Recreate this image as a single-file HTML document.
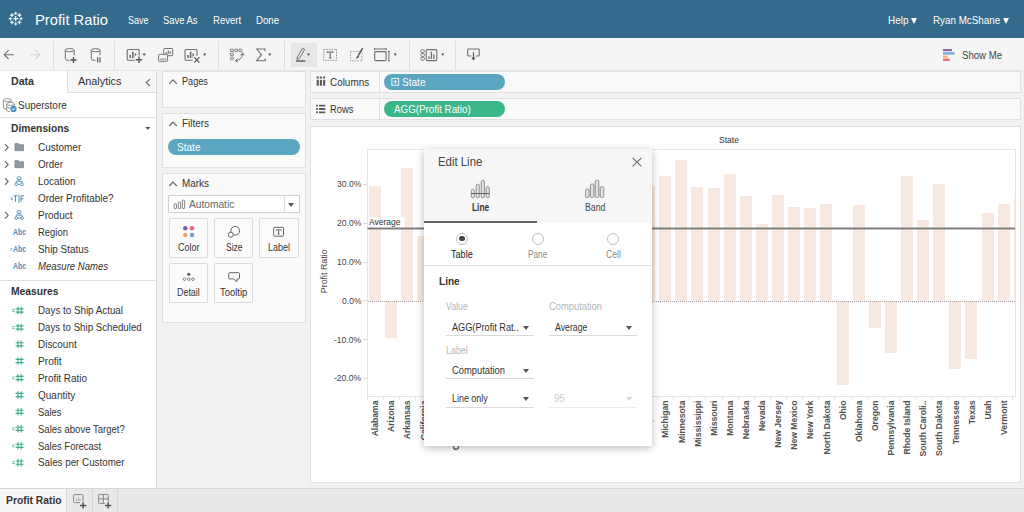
<!DOCTYPE html>
<html><head><meta charset="utf-8"><title>Profit Ratio</title>
<style>
*{box-sizing:border-box;margin:0;padding:0}
html,body{width:1024px;height:512px;overflow:hidden}
body{font-family:"Liberation Sans",sans-serif;background:#f2f2f2;color:#333;position:relative}
.a{position:absolute}
.t{position:absolute;white-space:nowrap;line-height:1;transform-origin:0 50%}
.r{position:absolute;left:0;top:0;white-space:nowrap;line-height:1;transform-origin:0 0;font-weight:700;font-size:9.5px;color:#505050}
.card{position:absolute;background:#fafafa;border:1px solid #e0e0e0}
.sep{position:absolute;top:41px;width:1px;height:29px;background:#dedede}
.tri{position:absolute;width:0;height:0;border-left:1.6px solid transparent;border-right:1.6px solid transparent;border-top:2.2px solid #555}
.btn{position:absolute;background:#fbfbfb;border:1px solid #dcdcdc;border-radius:1px}
.ul{position:absolute;height:1px;background:#d9d9d9}
.dd{position:absolute;width:0;height:0;border-left:3.1px solid transparent;border-right:3.1px solid transparent;border-top:4.2px solid #555}
svg{position:absolute;overflow:visible}
</style></head><body>
<div class="a" style="left:0;top:0;width:1024px;height:38px;background:#346b8c"></div>
<div class="a" style="left:0;top:38px;width:1024px;height:33px;background:#f5f5f5;border-bottom:1px solid #e6e6e6"></div>
<div class="sep" style="left:53px"></div><div class="sep" style="left:114px"></div><div class="sep" style="left:218px"></div><div class="sep" style="left:284px"></div><div class="sep" style="left:409px"></div><div class="sep" style="left:455px"></div>
<div class="a" style="left:290.5px;top:43px;width:26px;height:24px;background:#e7e7e7"></div>
<div class="a" style="left:0;top:71px;width:157px;height:417px;background:#fff;border-right:1px solid #d8d8d8"></div>
<div class="a" style="left:67px;top:71px;width:90px;height:22px;background:#f7f7f7;border-left:1px solid #dcdcdc;border-bottom:1px solid #dcdcdc;border-right:1px solid #d8d8d8"></div>
<div class="a" style="left:0;top:117px;width:156px;height:1px;background:#e0e0e0"></div>
<div class="a" style="left:0;top:280px;width:156px;height:1px;background:#e0e0e0"></div>
<div class="card" style="left:162px;top:71px;width:144px;height:37px"></div>
<div class="card" style="left:162px;top:113px;width:144px;height:54.5px"></div>
<div class="card" style="left:162px;top:173px;width:144px;height:150px"></div>
<div class="a" style="left:167.5px;top:139.2px;width:132.5px;height:16px;border-radius:8px;background:#5ba6c0"></div>
<div class="btn" style="left:168px;top:195px;width:132px;height:17.5px;background:#fff;border-color:#cfcfcf"></div>
<div class="a" style="left:284.4px;top:196px;width:1px;height:15.5px;background:#dcdcdc"></div>
<div class="dd" style="left:288.3px;top:202.5px"></div>
<div class="btn" style="left:168.6px;top:218px;width:39.8px;height:39.8px"></div><div class="btn" style="left:213.7px;top:218px;width:39.8px;height:39.8px"></div><div class="btn" style="left:259px;top:218px;width:39.8px;height:39.8px"></div><div class="btn" style="left:168.6px;top:263.3px;width:39.8px;height:39.8px"></div><div class="btn" style="left:213.7px;top:263.3px;width:39.8px;height:39.8px"></div>
<div class="card" style="left:310px;top:71px;width:711px;height:22px"></div>
<div class="card" style="left:310px;top:98px;width:711px;height:22px"></div>
<div class="a" style="left:379px;top:72px;width:1px;height:20px;background:#e0e0e0"></div>
<div class="a" style="left:379px;top:99px;width:1px;height:20px;background:#e0e0e0"></div>
<div class="a" style="left:384.1px;top:74px;width:121px;height:16px;border-radius:8px;background:#5ba6c0"></div>
<div class="a" style="left:384.1px;top:101px;width:121px;height:16px;border-radius:8px;background:#3cb78a"></div>
<div class="card" style="left:310px;top:126px;width:711px;height:357px;background:#fff"></div>
<div class="a" style="left:367px;top:148.5px;width:648.5px;height:248.5px;border:1px solid #e4e4e4"></div>
<div class="a" style="left:369.0px;top:185.5px;width:12px;height:115.5px;background:#f7e9df"></div><div class="a" style="left:385.1px;top:301.0px;width:12px;height:37.0px;background:#f7e9df"></div><div class="a" style="left:401.2px;top:168.0px;width:12px;height:133.0px;background:#f7e9df"></div><div class="a" style="left:417.4px;top:236.0px;width:12px;height:65.0px;background:#f7e9df"></div><div class="a" style="left:433.5px;top:215.0px;width:12px;height:86.0px;background:#f7e9df"></div><div class="a" style="left:449.6px;top:250.0px;width:12px;height:51.0px;background:#f7e9df"></div><div class="a" style="left:465.7px;top:301.0px;width:12px;height:29.0px;background:#f7e9df"></div><div class="a" style="left:481.8px;top:190.0px;width:12px;height:111.0px;background:#f7e9df"></div><div class="a" style="left:498.0px;top:210.0px;width:12px;height:91.0px;background:#f7e9df"></div><div class="a" style="left:514.1px;top:200.0px;width:12px;height:101.0px;background:#f7e9df"></div><div class="a" style="left:530.2px;top:301.0px;width:12px;height:44.0px;background:#f7e9df"></div><div class="a" style="left:546.3px;top:215.0px;width:12px;height:86.0px;background:#f7e9df"></div><div class="a" style="left:562.4px;top:225.0px;width:12px;height:76.0px;background:#f7e9df"></div><div class="a" style="left:578.6px;top:180.0px;width:12px;height:121.0px;background:#f7e9df"></div><div class="a" style="left:594.7px;top:200.0px;width:12px;height:101.0px;background:#f7e9df"></div><div class="a" style="left:610.8px;top:215.0px;width:12px;height:86.0px;background:#f7e9df"></div><div class="a" style="left:626.9px;top:190.0px;width:12px;height:111.0px;background:#f7e9df"></div><div class="a" style="left:643.0px;top:185.5px;width:12px;height:115.5px;background:#f7e9df"></div><div class="a" style="left:659.2px;top:176.0px;width:12px;height:125.0px;background:#f7e9df"></div><div class="a" style="left:675.3px;top:160.0px;width:12px;height:141.0px;background:#f7e9df"></div><div class="a" style="left:691.4px;top:186.7px;width:12px;height:114.3px;background:#f7e9df"></div><div class="a" style="left:707.5px;top:188.2px;width:12px;height:112.8px;background:#f7e9df"></div><div class="a" style="left:723.6px;top:174.0px;width:12px;height:127.0px;background:#f7e9df"></div><div class="a" style="left:739.8px;top:195.5px;width:12px;height:105.5px;background:#f7e9df"></div><div class="a" style="left:755.9px;top:223.7px;width:12px;height:77.3px;background:#f7e9df"></div><div class="a" style="left:772.0px;top:194.7px;width:12px;height:106.3px;background:#f7e9df"></div><div class="a" style="left:788.1px;top:206.7px;width:12px;height:94.3px;background:#f7e9df"></div><div class="a" style="left:804.2px;top:208.2px;width:12px;height:92.8px;background:#f7e9df"></div><div class="a" style="left:820.4px;top:203.5px;width:12px;height:97.5px;background:#f7e9df"></div><div class="a" style="left:836.5px;top:301.0px;width:12px;height:84.0px;background:#f7e9df"></div><div class="a" style="left:852.6px;top:205.0px;width:12px;height:96.0px;background:#f7e9df"></div><div class="a" style="left:868.7px;top:301.0px;width:12px;height:26.5px;background:#f7e9df"></div><div class="a" style="left:884.8px;top:301.0px;width:12px;height:51.5px;background:#f7e9df"></div><div class="a" style="left:901.0px;top:176.0px;width:12px;height:125.0px;background:#f7e9df"></div><div class="a" style="left:917.1px;top:219.5px;width:12px;height:81.5px;background:#f7e9df"></div><div class="a" style="left:933.2px;top:184.0px;width:12px;height:117.0px;background:#f7e9df"></div><div class="a" style="left:949.3px;top:301.0px;width:12px;height:67.7px;background:#f7e9df"></div><div class="a" style="left:965.4px;top:301.0px;width:12px;height:58.0px;background:#f7e9df"></div><div class="a" style="left:981.6px;top:213.2px;width:12px;height:87.8px;background:#f7e9df"></div><div class="a" style="left:997.7px;top:203.5px;width:12px;height:97.5px;background:#f7e9df"></div><div class="a" style="left:1013.6px;top:198.7px;width:1.4px;height:102.3px;background:#f7e9df"></div>
<div class="a" style="left:368px;top:300.5px;width:646.5px;height:0;border-top:1px dotted #a8a8a8"></div>
<div class="a" style="left:368px;top:216.5px;width:37px;height:11px;background:rgba(255,255,255,.85)"></div>
<svg style="left:0;top:0" width="1024" height="512"><rect x="367.5" y="227.55" width="647.5" height="1.9" fill="#7a7a7a"/></svg>
<div class="a" style="left:363px;top:183.5px;width:4px;height:1px;background:#d8d8d8"></div><div class="a" style="left:363px;top:222.5px;width:4px;height:1px;background:#d8d8d8"></div><div class="a" style="left:363px;top:261.5px;width:4px;height:1px;background:#d8d8d8"></div><div class="a" style="left:363px;top:300.2px;width:4px;height:1px;background:#d8d8d8"></div><div class="a" style="left:363px;top:339.0px;width:4px;height:1px;background:#d8d8d8"></div><div class="a" style="left:363px;top:377.5px;width:4px;height:1px;background:#d8d8d8"></div><div class="a" style="left:366.9px;top:397px;width:1px;height:3px;background:#e4e4e4"></div><div class="a" style="left:383.0px;top:397px;width:1px;height:3px;background:#e4e4e4"></div><div class="a" style="left:399.1px;top:397px;width:1px;height:3px;background:#e4e4e4"></div><div class="a" style="left:415.3px;top:397px;width:1px;height:3px;background:#e4e4e4"></div><div class="a" style="left:431.4px;top:397px;width:1px;height:3px;background:#e4e4e4"></div><div class="a" style="left:447.5px;top:397px;width:1px;height:3px;background:#e4e4e4"></div><div class="a" style="left:463.6px;top:397px;width:1px;height:3px;background:#e4e4e4"></div><div class="a" style="left:479.7px;top:397px;width:1px;height:3px;background:#e4e4e4"></div><div class="a" style="left:495.9px;top:397px;width:1px;height:3px;background:#e4e4e4"></div><div class="a" style="left:512.0px;top:397px;width:1px;height:3px;background:#e4e4e4"></div><div class="a" style="left:528.1px;top:397px;width:1px;height:3px;background:#e4e4e4"></div><div class="a" style="left:544.2px;top:397px;width:1px;height:3px;background:#e4e4e4"></div><div class="a" style="left:560.3px;top:397px;width:1px;height:3px;background:#e4e4e4"></div><div class="a" style="left:576.5px;top:397px;width:1px;height:3px;background:#e4e4e4"></div><div class="a" style="left:592.6px;top:397px;width:1px;height:3px;background:#e4e4e4"></div><div class="a" style="left:608.7px;top:397px;width:1px;height:3px;background:#e4e4e4"></div><div class="a" style="left:624.8px;top:397px;width:1px;height:3px;background:#e4e4e4"></div><div class="a" style="left:640.9px;top:397px;width:1px;height:3px;background:#e4e4e4"></div><div class="a" style="left:657.1px;top:397px;width:1px;height:3px;background:#e4e4e4"></div><div class="a" style="left:673.2px;top:397px;width:1px;height:3px;background:#e4e4e4"></div><div class="a" style="left:689.3px;top:397px;width:1px;height:3px;background:#e4e4e4"></div><div class="a" style="left:705.4px;top:397px;width:1px;height:3px;background:#e4e4e4"></div><div class="a" style="left:721.5px;top:397px;width:1px;height:3px;background:#e4e4e4"></div><div class="a" style="left:737.7px;top:397px;width:1px;height:3px;background:#e4e4e4"></div><div class="a" style="left:753.8px;top:397px;width:1px;height:3px;background:#e4e4e4"></div><div class="a" style="left:769.9px;top:397px;width:1px;height:3px;background:#e4e4e4"></div><div class="a" style="left:786.0px;top:397px;width:1px;height:3px;background:#e4e4e4"></div><div class="a" style="left:802.1px;top:397px;width:1px;height:3px;background:#e4e4e4"></div><div class="a" style="left:818.3px;top:397px;width:1px;height:3px;background:#e4e4e4"></div><div class="a" style="left:834.4px;top:397px;width:1px;height:3px;background:#e4e4e4"></div><div class="a" style="left:850.5px;top:397px;width:1px;height:3px;background:#e4e4e4"></div><div class="a" style="left:866.6px;top:397px;width:1px;height:3px;background:#e4e4e4"></div><div class="a" style="left:882.7px;top:397px;width:1px;height:3px;background:#e4e4e4"></div><div class="a" style="left:898.9px;top:397px;width:1px;height:3px;background:#e4e4e4"></div><div class="a" style="left:915.0px;top:397px;width:1px;height:3px;background:#e4e4e4"></div><div class="a" style="left:931.1px;top:397px;width:1px;height:3px;background:#e4e4e4"></div><div class="a" style="left:947.2px;top:397px;width:1px;height:3px;background:#e4e4e4"></div><div class="a" style="left:963.3px;top:397px;width:1px;height:3px;background:#e4e4e4"></div><div class="a" style="left:979.5px;top:397px;width:1px;height:3px;background:#e4e4e4"></div><div class="a" style="left:995.6px;top:397px;width:1px;height:3px;background:#e4e4e4"></div><div class="a" style="left:1011.7px;top:397px;width:1px;height:3px;background:#e4e4e4"></div>
<div class="r" style="transform:translate(375.0px,400.5px) rotate(-90deg) scaleX(.905) translate(-100%,-50%)">Alabama</div><div class="r" style="transform:translate(391.1px,400.5px) rotate(-90deg) scaleX(.905) translate(-100%,-50%)">Arizona</div><div class="r" style="transform:translate(407.2px,400.5px) rotate(-90deg) scaleX(.905) translate(-100%,-50%)">Arkansas</div><div class="r" style="transform:translate(423.4px,400.5px) rotate(-90deg) scaleX(.905) translate(-100%,-50%)">California</div><div class="r" style="transform:translate(439.5px,400.5px) rotate(-90deg) scaleX(.905) translate(-100%,-50%)">Colorado</div><div class="r" style="transform:translate(455.6px,400.5px) rotate(-90deg) scaleX(.905) translate(-100%,-50%)">Connecticut</div><div class="r" style="transform:translate(471.7px,400.5px) rotate(-90deg) scaleX(.905) translate(-100%,-50%)">Delaware</div><div class="r" style="transform:translate(487.8px,400.5px) rotate(-90deg) scaleX(.905) translate(-100%,-50%)">Florida</div><div class="r" style="transform:translate(504.0px,400.5px) rotate(-90deg) scaleX(.905) translate(-100%,-50%)">Georgia</div><div class="r" style="transform:translate(520.1px,400.5px) rotate(-90deg) scaleX(.905) translate(-100%,-50%)">Idaho</div><div class="r" style="transform:translate(536.2px,400.5px) rotate(-90deg) scaleX(.905) translate(-100%,-50%)">Illinois</div><div class="r" style="transform:translate(552.3px,400.5px) rotate(-90deg) scaleX(.905) translate(-100%,-50%)">Indiana</div><div class="r" style="transform:translate(568.4px,400.5px) rotate(-90deg) scaleX(.905) translate(-100%,-50%)">Iowa</div><div class="r" style="transform:translate(584.6px,400.5px) rotate(-90deg) scaleX(.905) translate(-100%,-50%)">Kansas</div><div class="r" style="transform:translate(600.7px,400.5px) rotate(-90deg) scaleX(.905) translate(-100%,-50%)">Kentucky</div><div class="r" style="transform:translate(616.8px,400.5px) rotate(-90deg) scaleX(.905) translate(-100%,-50%)">Louisiana</div><div class="r" style="transform:translate(632.9px,400.5px) rotate(-90deg) scaleX(.905) translate(-100%,-50%)">Maine</div><div class="r" style="transform:translate(649.0px,400.5px) rotate(-90deg) scaleX(.905) translate(-100%,-50%)"></div><div class="r" style="transform:translate(665.2px,400.5px) rotate(-90deg) scaleX(.905) translate(-100%,-50%)">Michigan</div><div class="r" style="transform:translate(681.3px,400.5px) rotate(-90deg) scaleX(.905) translate(-100%,-50%)">Minnesota</div><div class="r" style="transform:translate(697.4px,400.5px) rotate(-90deg) scaleX(.905) translate(-100%,-50%)">Mississippi</div><div class="r" style="transform:translate(713.5px,400.5px) rotate(-90deg) scaleX(.905) translate(-100%,-50%)">Missouri</div><div class="r" style="transform:translate(729.6px,400.5px) rotate(-90deg) scaleX(.905) translate(-100%,-50%)">Montana</div><div class="r" style="transform:translate(745.8px,400.5px) rotate(-90deg) scaleX(.905) translate(-100%,-50%)">Nebraska</div><div class="r" style="transform:translate(761.9px,400.5px) rotate(-90deg) scaleX(.905) translate(-100%,-50%)">Nevada</div><div class="r" style="transform:translate(778.0px,400.5px) rotate(-90deg) scaleX(.905) translate(-100%,-50%)">New Jersey</div><div class="r" style="transform:translate(794.1px,400.5px) rotate(-90deg) scaleX(.905) translate(-100%,-50%)">New Mexico</div><div class="r" style="transform:translate(810.2px,400.5px) rotate(-90deg) scaleX(.905) translate(-100%,-50%)">New York</div><div class="r" style="transform:translate(826.4px,400.5px) rotate(-90deg) scaleX(.905) translate(-100%,-50%)">North Dakota</div><div class="r" style="transform:translate(842.5px,400.5px) rotate(-90deg) scaleX(.905) translate(-100%,-50%)">Ohio</div><div class="r" style="transform:translate(858.6px,400.5px) rotate(-90deg) scaleX(.905) translate(-100%,-50%)">Oklahoma</div><div class="r" style="transform:translate(874.7px,400.5px) rotate(-90deg) scaleX(.905) translate(-100%,-50%)">Oregon</div><div class="r" style="transform:translate(890.8px,400.5px) rotate(-90deg) scaleX(.905) translate(-100%,-50%)">Pennsylvania</div><div class="r" style="transform:translate(907.0px,400.5px) rotate(-90deg) scaleX(.905) translate(-100%,-50%)">Rhode Island</div><div class="r" style="transform:translate(923.1px,400.5px) rotate(-90deg) scaleX(.905) translate(-100%,-50%)">South Caroli..</div><div class="r" style="transform:translate(939.2px,400.5px) rotate(-90deg) scaleX(.905) translate(-100%,-50%)">South Dakota</div><div class="r" style="transform:translate(955.3px,400.5px) rotate(-90deg) scaleX(.905) translate(-100%,-50%)">Tennessee</div><div class="r" style="transform:translate(971.4px,400.5px) rotate(-90deg) scaleX(.905) translate(-100%,-50%)">Texas</div><div class="r" style="transform:translate(987.6px,400.5px) rotate(-90deg) scaleX(.905) translate(-100%,-50%)">Utah</div><div class="r" style="transform:translate(1003.7px,400.5px) rotate(-90deg) scaleX(.905) translate(-100%,-50%)">Vermont</div>
<div class="a" style="left:653px;top:420px;width:1px;height:2px;background:#b9d0e8"></div>
<div class="r" style="font-weight:400;font-size:9.5px;color:#444;transform:translate(324.1px,271.3px) rotate(-90deg) scaleX(.93) translate(-50%,-50%)">Profit Ratio</div>
<div class="a" style="left:424px;top:149px;width:228px;height:297px;background:#fff;box-shadow:0 2px 8px rgba(0,0,0,.27)"></div>
<div class="a" style="left:424px;top:149px;width:228px;height:74px;background:#f7f7f7"></div>
<div class="a" style="left:424px;top:220.5px;width:113.2px;height:2.3px;background:#666"></div>
<div class="a" style="left:424px;top:265px;width:228px;height:1px;background:#e2e2e2"></div>
<div class="ul" style="left:445.7px;top:334.5px;width:88px"></div><div class="ul" style="left:549px;top:334.5px;width:87.7px"></div><div class="ul" style="left:445.7px;top:378px;width:88px"></div><div class="ul" style="left:445.7px;top:406.5px;width:88px"></div><div class="ul" style="left:549px;top:406.5px;width:87.7px;background:#ececec"></div>
<div class="dd" style="left:523.2px;top:325.5px;border-top-color:#555"></div><div class="dd" style="left:626.3px;top:325.5px;border-top-color:#555"></div><div class="dd" style="left:523.2px;top:369px;border-top-color:#555"></div><div class="dd" style="left:523.2px;top:397.2px;border-top-color:#555"></div><div class="dd" style="left:626.3px;top:397.2px;border-top-color:#d6d6d6"></div>
<div class="a" style="left:456px;top:232.5px;width:12px;height:12px;border-radius:50%;background:#fff;border:1px solid #bdbdbd"></div><div class="a" style="left:531.7px;top:232.5px;width:12px;height:12px;border-radius:50%;background:#fff;border:1px solid #bdbdbd"></div><div class="a" style="left:607.2px;top:232.5px;width:12px;height:12px;border-radius:50%;background:#fff;border:1px solid #bdbdbd"></div><div class="a" style="left:459.2px;top:235.7px;width:5.6px;height:5.6px;border-radius:50%;background:#444"></div>
<div class="a" style="left:0;top:488px;width:1024px;height:24px;background:#e9e9e9;border-top:1px solid #d6d6d6"></div>
<div class="a" style="left:0;top:489px;width:66px;height:23px;background:#f6f6f6"></div>
<div class="a" style="left:66px;top:489px;width:1px;height:23px;background:#d6d6d6"></div><div class="a" style="left:92px;top:489px;width:1px;height:23px;background:#d6d6d6"></div><div class="a" style="left:117px;top:489px;width:1px;height:23px;background:#d6d6d6"></div>
<div class="a" style="left:910.9px;top:17.6px;width:0;height:0;border-left:3.2px solid transparent;border-right:3.2px solid transparent;border-top:6.2px solid #fff"></div><div class="a" style="left:1003px;top:17.6px;width:0;height:0;border-left:3.2px solid transparent;border-right:3.2px solid transparent;border-top:6.2px solid #fff"></div>
<div class="t" style="left:35px;top:12.10px;font-size:15px;color:#fff;transform:scaleX(0.9851)">Profit Ratio</div>
<div class="t" style="left:127.5px;top:14.70px;font-size:11px;color:#fff;transform:scaleX(0.8174)">Save</div>
<div class="t" style="left:163px;top:14.70px;font-size:11px;color:#fff;transform:scaleX(0.8548)">Save As</div>
<div class="t" style="left:212.5px;top:14.70px;font-size:11px;color:#fff;transform:scaleX(0.8702)">Revert</div>
<div class="t" style="left:255.5px;top:14.70px;font-size:11px;color:#fff;transform:scaleX(0.8746)">Done</div>
<div class="t" style="left:887.7px;top:14.70px;font-size:11px;color:#fff;transform:scaleX(0.9017)">Help</div>
<div class="t" style="left:933.2px;top:14.70px;font-size:11px;color:#fff;transform:scaleX(0.8921)">Ryan McShane</div>
<div class="t" style="left:962px;top:50.00px;font-size:11px;color:#444;transform:scaleX(0.8722)">Show Me</div>
<div class="t" style="left:11px;top:75.65px;font-size:11.5px;color:#333;font-weight:700;transform:scaleX(0.9223)">Data</div>
<div class="t" style="left:77.7px;top:75.85px;font-size:11.5px;color:#333;transform:scaleX(0.9450)">Analytics</div>
<div class="t" style="left:18.2px;top:99.95px;font-size:10.5px;color:#333;transform:scaleX(0.9499)">Superstore</div>
<div class="t" style="left:11px;top:123.25px;font-size:11.5px;color:#333;font-weight:700;transform:scaleX(0.8928)">Dimensions</div>
<div class="t" style="left:37.5px;top:142.25px;font-size:10.5px;color:#333;transform:scaleX(0.9491)">Customer</div>
<div class="t" style="left:37.5px;top:159.25px;font-size:10.5px;color:#333;transform:scaleX(0.9313)">Order</div>
<div class="t" style="left:37.5px;top:176.25px;font-size:10.5px;color:#333;transform:scaleX(0.9445)">Location</div>
<div class="t" style="left:37.5px;top:193.25px;font-size:10.5px;color:#333;transform:scaleX(0.9441)">Order Profitable?</div>
<div class="t" style="left:37.5px;top:210.05px;font-size:10.5px;color:#333;transform:scaleX(0.9534)">Product</div>
<div class="t" style="left:37.5px;top:226.95px;font-size:10.5px;color:#333;transform:scaleX(0.9014)">Region</div>
<div class="t" style="left:37.5px;top:243.95px;font-size:10.5px;color:#333;transform:scaleX(0.9441)">Ship Status</div>
<div class="t" style="left:37.5px;top:260.95px;font-size:10.5px;color:#333;font-style:italic;transform:scaleX(0.9087)">Measure Names</div>
<div class="t" style="left:11px;top:286.45px;font-size:11.5px;color:#333;font-weight:700;transform:scaleX(0.8952)">Measures</div>
<div class="t" style="left:37.5px;top:305.25px;font-size:10.5px;color:#333;transform:scaleX(0.9334)">Days to Ship Actual</div>
<div class="t" style="left:37.5px;top:322.25px;font-size:10.5px;color:#333;transform:scaleX(0.9252)">Days to Ship Scheduled</div>
<div class="t" style="left:37.5px;top:339.05px;font-size:10.5px;color:#333;transform:scaleX(0.9472)">Discount</div>
<div class="t" style="left:37.5px;top:355.75px;font-size:10.5px;color:#333;transform:scaleX(0.9667)">Profit</div>
<div class="t" style="left:37.5px;top:372.75px;font-size:10.5px;color:#333;transform:scaleX(0.9434)">Profit Ratio</div>
<div class="t" style="left:37.5px;top:389.75px;font-size:10.5px;color:#333;transform:scaleX(0.9512)">Quantity</div>
<div class="t" style="left:37.5px;top:406.55px;font-size:10.5px;color:#333;transform:scaleX(0.8947)">Sales</div>
<div class="t" style="left:37.5px;top:423.55px;font-size:10.5px;color:#333;transform:scaleX(0.9074)">Sales above Target?</div>
<div class="t" style="left:37.5px;top:440.55px;font-size:10.5px;color:#333;transform:scaleX(0.9025)">Sales Forecast</div>
<div class="t" style="left:37.5px;top:457.35px;font-size:10.5px;color:#333;transform:scaleX(0.9321)">Sales per Customer</div>
<div class="t" style="left:5.6px;top:495.35px;font-size:11.5px;color:#333;font-weight:700;transform:scaleX(0.8970)">Profit Ratio</div>
<div class="t" style="left:181.7px;top:76.35px;font-size:10.5px;color:#333;transform:scaleX(0.8697)">Pages</div>
<div class="t" style="left:181.7px;top:118.45px;font-size:10.5px;color:#333;transform:scaleX(0.9443)">Filters</div>
<div class="t" style="left:176.7px;top:142.25px;font-size:10.5px;color:#fff;transform:scaleX(0.9580)">State</div>
<div class="t" style="left:181.7px;top:178.45px;font-size:10.5px;color:#333;transform:scaleX(0.9443)">Marks</div>
<div class="t" style="left:189.2px;top:198.55px;font-size:10.5px;color:#666;transform:scaleX(0.9703)">Automatic</div>
<div class="t" style="left:177.7px;top:242.80px;font-size:10px;color:#333;transform:scaleX(0.8993)">Color</div>
<div class="t" style="left:225.5px;top:242.80px;font-size:10px;color:#333;transform:scaleX(0.8482)">Size</div>
<div class="t" style="left:267.8px;top:242.80px;font-size:10px;color:#333;transform:scaleX(0.8950)">Label</div>
<div class="t" style="left:177.2px;top:288.10px;font-size:10px;color:#333;transform:scaleX(0.8914)">Detail</div>
<div class="t" style="left:220.2px;top:288.10px;font-size:10px;color:#333;transform:scaleX(0.9444)">Tooltip</div>
<div class="t" style="left:330px;top:76.75px;font-size:10.5px;color:#333;transform:scaleX(0.9436)">Columns</div>
<div class="t" style="left:329.7px;top:103.95px;font-size:10.5px;color:#333;transform:scaleX(0.8871)">Rows</div>
<div class="t" style="left:401.6px;top:76.95px;font-size:10.5px;color:#fff;transform:scaleX(0.9580)">State</div>
<div class="t" style="left:393.5px;top:104.15px;font-size:10.5px;color:#fff;transform:scaleX(0.9322)">AGG(Profit Ratio)</div>
<div class="t" style="left:718.7px;top:135.25px;font-size:9.5px;color:#333;transform:scaleX(0.9014)">State</div>
<div class="t" style="left:336.7px;top:178.85px;font-size:9.5px;color:#444;transform:scaleX(0.9021)">30.0%</div>
<div class="t" style="left:336.7px;top:218.45px;font-size:9.5px;color:#444;transform:scaleX(0.9021)">20.0%</div>
<div class="t" style="left:336.7px;top:257.25px;font-size:9.5px;color:#444;transform:scaleX(0.9021)">10.0%</div>
<div class="t" style="left:341.5px;top:295.85px;font-size:9.5px;color:#444;transform:scaleX(0.9004)">0.0%</div>
<div class="t" style="left:334px;top:334.55px;font-size:9.5px;color:#444;transform:scaleX(0.8967)">-10.0%</div>
<div class="t" style="left:334px;top:373.25px;font-size:9.5px;color:#444;transform:scaleX(0.8967)">-20.0%</div>
<div class="t" style="left:369.3px;top:216.85px;font-size:9.5px;color:#333;transform:scaleX(0.8916)">Average</div>
<div class="t" style="left:438.2px;top:156.00px;font-size:12px;color:#444;transform:scaleX(0.9485)">Edit Line</div>
<div class="t" style="left:472px;top:202.80px;font-size:10px;color:#333;font-weight:700;transform:scaleX(0.8365)">Line</div>
<div class="t" style="left:584.5px;top:202.80px;font-size:10px;color:#444;transform:scaleX(0.8776)">Band</div>
<div class="t" style="left:451px;top:249.60px;font-size:10px;color:#222;transform:scaleX(0.9077)">Table</div>
<div class="t" style="left:527.7px;top:249.60px;font-size:10px;color:#888;transform:scaleX(0.8262)">Pane</div>
<div class="t" style="left:606.2px;top:249.60px;font-size:10px;color:#888;transform:scaleX(0.8587)">Cell</div>
<div class="t" style="left:438.5px;top:276.45px;font-size:11.5px;color:#333;font-weight:700;transform:scaleX(0.8756)">Line</div>
<div class="t" style="left:445.7px;top:302.20px;font-size:10px;color:#b5b5b5;transform:scaleX(0.8775)">Value</div>
<div class="t" style="left:549px;top:302.20px;font-size:10px;color:#b5b5b5;transform:scaleX(0.9347)">Computation</div>
<div class="t" style="left:451.5px;top:322.60px;font-size:10px;color:#333;transform:scaleX(0.9162)">AGG(Profit Rat..</div>
<div class="t" style="left:554.5px;top:322.60px;font-size:10px;color:#333;transform:scaleX(0.8765)">Average</div>
<div class="t" style="left:445.7px;top:346.20px;font-size:10px;color:#b5b5b5;transform:scaleX(0.8909)">Label</div>
<div class="t" style="left:451.5px;top:365.60px;font-size:10px;color:#333;transform:scaleX(0.9347)">Computation</div>
<div class="t" style="left:451.5px;top:393.80px;font-size:10px;color:#333;transform:scaleX(0.8918)">Line only</div>
<div class="t" style="left:554.2px;top:393.80px;font-size:10px;color:#ccc;transform:scaleX(0.9708)">95</div>
<svg style="left:0;top:0" width="1024" height="512" viewBox="0 0 1024 512" fill="none" stroke-linecap="butt">
<path d="M13.1 18.7H18.3M15.7 16.099999999999998V21.3" stroke="#fff" stroke-width="1.3"/><path d="M14.1 13.399999999999999H17.3M15.7 11.799999999999999V14.999999999999998" stroke="#fff" stroke-width="1.0"/><path d="M14.1 24.0H17.3M15.7 22.4V25.6" stroke="#fff" stroke-width="1.0"/><path d="M8.7 18.7H11.899999999999999M10.299999999999999 17.099999999999998V20.3" stroke="#fff" stroke-width="1.0"/><path d="M19.5 18.7H22.700000000000003M21.1 17.099999999999998V20.3" stroke="#fff" stroke-width="1.0"/><path d="M10.1 15.1H13.9M12.0 13.2V17.0" stroke="#fff" stroke-width="1.1"/><path d="M17.5 15.1H21.299999999999997M19.4 13.2V17.0" stroke="#fff" stroke-width="1.1"/><path d="M10.1 22.3H13.9M12.0 20.400000000000002V24.2" stroke="#fff" stroke-width="1.1"/><path d="M17.5 22.3H21.299999999999997M19.4 20.400000000000002V24.2" stroke="#fff" stroke-width="1.1"/>
<path d="M13.7 54.7H4.2M8.7 50.2L4.2 54.7L8.7 59.2" stroke="#6f6f6f" stroke-width="1.1"/><path d="M30 54.7H39.6M35.2 50.2L39.7 54.7L35.2 59.2" stroke="#d2d2d2" stroke-width="1.1"/><ellipse cx="69.75" cy="50.2" rx="4.450000000000003" ry="1.6" stroke="#6f6f6f" stroke-width="1"/><path d="M65.3 50.2V58.3Q65.3 60.4 68.3 60.4H69.5M74.2 50.2V55.4" stroke="#6f6f6f" stroke-width="1"/><path d="M70.4 60H76.6M73.5 57V63" stroke="#555" stroke-width="1.4"/><ellipse cx="95.65" cy="50.2" rx="4.350000000000001" ry="1.6" stroke="#6f6f6f" stroke-width="1"/><path d="M91.3 50.2V58.3Q91.3 60.4 94.3 60.4H95.5M100 50.2V55.4" stroke="#6f6f6f" stroke-width="1"/><path d="M97.6 57.2V62.6M100 57.2V62.6" stroke="#666" stroke-width="1.3"/>
<rect x="127.2" y="49.5" width="12" height="10.8" rx="1" stroke="#6f6f6f" stroke-width="1.1"/><path d="M130.2 58V55M132.9 58V51.8M135.5 58V53.5" stroke="#666" stroke-width="1.5"/><rect x="134.8" y="55.6" width="8" height="8" fill="#f5f5f5" stroke="none"/><path d="M135.8 59.8H142.2M139 56.6V63" stroke="#555" stroke-width="1.4"/><path d="M142.6 53.6h3.2l-1.6 2.4z" fill="#555" stroke="none"/><rect x="163.7" y="48.5" width="9" height="7.2" rx=".8" stroke="#6f6f6f" stroke-width="1"/><path d="M166.2 54V52M168.2 54V50.3M170.2 54V51.3" stroke="#6f6f6f" stroke-width="1.1"/><rect x="158.6" y="54.3" width="9" height="7" rx=".8" fill="#f5f5f5" stroke="#6f6f6f" stroke-width="1"/><path d="M160.3 59.2h1.4M162.4 59.2h1.4M164.5 59.2h1.4" stroke="#6f6f6f" stroke-width="1.3"/><rect x="185" y="49.5" width="12" height="10.8" rx="1" stroke="#6f6f6f" stroke-width="1.1"/><path d="M188 58V55M190.6 58V51.8M193.2 58V53.5" stroke="#666" stroke-width="1.5"/><rect x="192.8" y="55.8" width="8" height="8" fill="#f5f5f5" stroke="none"/><path d="M194.2 57.2L199.4 62.6M199.4 57.2L194.2 62.6" stroke="#555" stroke-width="1.2"/><path d="M203 53.6h3.2l-1.6 2.4z" fill="#555" stroke="none"/>
<rect x="230.4" y="49.2" width="3" height="2.4" rx=".7" stroke="#6f6f6f" stroke-width=".9"/><rect x="234.7" y="49.2" width="3" height="2.4" rx=".7" stroke="#6f6f6f" stroke-width=".9"/><rect x="239" y="49.2" width="3" height="2.4" rx=".7" stroke="#6f6f6f" stroke-width=".9"/><rect x="230.4" y="53.2" width="3" height="2.4" rx=".7" stroke="#6f6f6f" stroke-width=".9"/><rect x="230.4" y="57.2" width="3" height="2.4" rx=".7" stroke="#6f6f6f" stroke-width=".9"/><path d="M236 60.6Q242.3 59.6 242.6 53.5" stroke="#6f6f6f" stroke-width="1"/><path d="M240.8 55.4L242.6 52.8L244.2 55.4M237.6 58.8L235.3 60.7L237.8 62.2" stroke="#6f6f6f" stroke-width="1"/><path d="M265 51V49H256.8L261.4 54.8L256.6 60.8H265.2V58.6" stroke="#6f6f6f" stroke-width="1.1"/><path d="M268.2 53.6h3.2l-1.6 2.4z" fill="#555" stroke="none"/><path d="M302.6 48.3L304.7 49.4L299.6 58.2L297 59.4L297.4 57.1Z" stroke="#6f6f6f" stroke-width="1"/><path d="M296 61H305.4" stroke="#777" stroke-width="1.8"/><path d="M306.9 53.6h3.2l-1.6 2.4z" fill="#555" stroke="none"/><rect x="323.7" y="49.4" width="12.8" height="11" stroke="#888" stroke-width=".9" stroke-dasharray="1.5 1.1"/><path d="M327.3 53V52H333V53M330.15 52V58M329 58H331.3" stroke="#666" stroke-width="1.1"/><rect x="350.6" y="51.4" width="11.2" height="9.4" stroke="#999" stroke-width=".9" stroke-dasharray="1.5 1.1"/><path d="M362.6 48.2L358.3 55.6" stroke="#555" stroke-width="1.4"/><path d="M358 55.4L356 58.3L359 57.2Z" fill="#555" stroke="#555" stroke-width=".6"/><rect x="374.7" y="51.6" width="11.4" height="9" rx=".8" stroke="#6f6f6f" stroke-width="1.1"/><path d="M374.4 49H386.4M374.6 48V50M386.2 48V50M388.9 51.4V61M388 51.5H389.9M388 60.9H389.9" stroke="#6f6f6f" stroke-width="1"/><path d="M393.6 53.6h3.2l-1.6 2.4z" fill="#555" stroke="none"/><rect x="420.8" y="49.8" width="3.6" height="2.8" rx="1" stroke="#6f6f6f" stroke-width=".9"/><rect x="420.8" y="53.6" width="3.6" height="2.8" rx="1" stroke="#6f6f6f" stroke-width=".9"/><rect x="420.8" y="57.4" width="3.6" height="2.8" rx="1" stroke="#6f6f6f" stroke-width=".9"/><rect x="426.2" y="49.6" width="10.6" height="11" rx="1" stroke="#6f6f6f" stroke-width="1.1"/><path d="M429 59V56.3M431.4 59V51.8M433.8 59V54.2" stroke="#6f6f6f" stroke-width="1.3"/><path d="M441.1 53.6h3.2l-1.6 2.4z" fill="#555" stroke="none"/><path d="M471.3 56H468.6Q467.7 56 467.7 55V49.9Q467.7 49 468.6 49H478.3Q479.2 49 479.2 49.9V55Q479.2 56 478.3 56H475.6" stroke="#6f6f6f" stroke-width="1.1"/><path d="M473.45 52.3V58.6" stroke="#555" stroke-width="1.1"/><path d="M471.4 57.6H475.5L473.45 60.7Z" fill="#555" stroke="none"/>
<rect x="943" y="49" width="9" height="2.2" fill="#8e6aa8"/><rect x="943" y="52.2" width="11.5" height="2.4" fill="#79a8dc"/><rect x="943" y="55.6" width="4.6" height="2.1" fill="#f6a860"/><rect x="943" y="58.6" width="6.8" height="2.3" fill="#ee6a7c"/>
<path d="M150 79.2L146.2 82.6L150 86" stroke="#666" stroke-width="1.1"/><path d="M169.2 83.89999999999999L173 79.89999999999999L176.8 83.89999999999999" stroke="#666" stroke-width="1.1"/><path d="M169.2 126.0L173 122.0L176.8 126.0" stroke="#666" stroke-width="1.1"/><path d="M169.2 186.0L173 182.0L176.8 186.0" stroke="#666" stroke-width="1.1"/><path d="M145.2 127h5.2l-2.6 2.8z" fill="#555" stroke="none"/><g stroke="#8a8a8a" stroke-width=".9"><ellipse cx="7.3" cy="100.2" rx="3.9" ry="1.5"/><path d="M3.4 100.2V107.6Q3.4 109.2 7 109.3M11.2 100.2V102"/><ellipse cx="10.6" cy="103.9" rx="3.9" ry="1.5"/><path d="M6.7 103.9V110Q6.7 111.6 10 111.7M14.5 103.9V105.6M6.7 106.8Q7.5 108 10 108.1"/></g><circle cx="13.5" cy="108.9" r="3.1" fill="#3d8fc4"/><path d="M12 108.9L13.1 110.1L15.1 107.7" stroke="#fff" stroke-width=".9"/>
<path d="M5 144.1L8.2 147.5L5 150.9" stroke="#666" stroke-width="1.1"/><path d="M5 161.1L8.2 164.5L5 167.9" stroke="#666" stroke-width="1.1"/><path d="M5 178.1L8.2 181.5L5 184.9" stroke="#666" stroke-width="1.1"/><path d="M5 211.9L8.2 215.3L5 218.70000000000002" stroke="#666" stroke-width="1.1"/><path d="M14.9 143.6H18.4L19.2 144.7H23.5V150.7H14.9Z" fill="#9499a5" stroke="#7e8391" stroke-width=".7"/><path d="M14.9 160.6H18.4L19.2 161.7H23.5V167.7H14.9Z" fill="#9499a5" stroke="#7e8391" stroke-width=".7"/><g stroke="#4c8db6" stroke-width=".9"><rect x="17.3" y="176.9" width="3.6" height="2.6" rx=".5"/><path d="M19.1 179.5V181.3M16.2 182.9V181.3H22V182.9"/><circle cx="16.2" cy="184.3" r="1.4"/><circle cx="22" cy="184.3" r="1.4"/><path d="M17.6 184.3H20.6"/></g><g stroke="#4c8db6" stroke-width=".9"><rect x="17.3" y="210.7" width="3.6" height="2.6" rx=".5"/><path d="M19.1 213.29999999999998V215.1M16.2 216.7V215.1H22V216.7"/><circle cx="16.2" cy="218.1" r="1.4"/><circle cx="22" cy="218.1" r="1.4"/><path d="M17.6 218.1H20.6"/></g>
<g stroke="#4c8db6" stroke-width="1"><path d="M10.8 197.9h1.8M10.8 199.70000000000002h1.8"/><path d="M13.6 195.8H17.4M15.5 195.8V201.8" /><path d="M19 194.60000000000002V203.0" stroke-width=".9"/><path d="M21 201.8V195.8H24M21 198.8H23.4"/></g><text x="13.1" y="235.39999999999998" font-family="Liberation Sans" font-size="9.4" font-weight="700" fill="#4c8db6" stroke="none" textLength="13" lengthAdjust="spacingAndGlyphs">Abc</text><text x="13.1" y="252.39999999999998" font-family="Liberation Sans" font-size="9.4" font-weight="700" fill="#4c8db6" stroke="none" textLength="13" lengthAdjust="spacingAndGlyphs">Abc</text><path d="M10.6 248.6h1.6M10.6 250.0h1.6" stroke="#4c8db6" stroke-width=".8"/><text x="13.1" y="269.4" font-family="Liberation Sans" font-size="9.4" font-weight="700" fill="#4c8db6" stroke="none" textLength="13" lengthAdjust="spacingAndGlyphs">Abc</text>
<path d="M18 306.7V314.3M21.2 306.7V314.3M15.6 308.9H23.6M15.6 312.1H23.6" stroke="#3fae86" stroke-width="1.1"/><path d="M12.3 309.6h2.2M12.3 311.4h2.2" stroke="#3fae86" stroke-width=".9"/><path d="M18 323.7V331.3M21.2 323.7V331.3M15.6 325.9H23.6M15.6 329.1H23.6" stroke="#3fae86" stroke-width="1.1"/><path d="M12.3 326.6h2.2M12.3 328.4h2.2" stroke="#3fae86" stroke-width=".9"/><path d="M18 340.5V348.1M21.2 340.5V348.1M15.6 342.7H23.6M15.6 345.90000000000003H23.6" stroke="#3fae86" stroke-width="1.1"/><path d="M18 357.2V364.8M21.2 357.2V364.8M15.6 359.4H23.6M15.6 362.6H23.6" stroke="#3fae86" stroke-width="1.1"/><path d="M18 374.2V381.8M21.2 374.2V381.8M15.6 376.4H23.6M15.6 379.6H23.6" stroke="#3fae86" stroke-width="1.1"/><path d="M12.3 377.1h2.2M12.3 378.9h2.2" stroke="#3fae86" stroke-width=".9"/><path d="M18 391.2V398.8M21.2 391.2V398.8M15.6 393.4H23.6M15.6 396.6H23.6" stroke="#3fae86" stroke-width="1.1"/><path d="M18 408.0V415.6M21.2 408.0V415.6M15.6 410.2H23.6M15.6 413.40000000000003H23.6" stroke="#3fae86" stroke-width="1.1"/><path d="M18 425.0V432.6M21.2 425.0V432.6M15.6 427.2H23.6M15.6 430.40000000000003H23.6" stroke="#3fae86" stroke-width="1.1"/><path d="M12.3 427.90000000000003h2.2M12.3 429.7h2.2" stroke="#3fae86" stroke-width=".9"/><path d="M18 442.0V449.6M21.2 442.0V449.6M15.6 444.2H23.6M15.6 447.40000000000003H23.6" stroke="#3fae86" stroke-width="1.1"/><path d="M12.3 444.90000000000003h2.2M12.3 446.7h2.2" stroke="#3fae86" stroke-width=".9"/><path d="M18 458.8V466.40000000000003M21.2 458.8V466.40000000000003M15.6 461.0H23.6M15.6 464.20000000000005H23.6" stroke="#3fae86" stroke-width="1.1"/><path d="M12.3 461.70000000000005h2.2M12.3 463.5h2.2" stroke="#3fae86" stroke-width=".9"/>
<g stroke="#777" stroke-width=".9"><rect x="174.2" y="203.8" width="2.3" height="4.8" rx=".5"/><rect x="178.3" y="202.2" width="2.3" height="6.4" rx=".5"/><rect x="182.4" y="200.2" width="2.3" height="8.4" rx=".5"/></g><circle cx="185.3" cy="228.3" r="2.2" fill="#7d5fa6"/><circle cx="192" cy="228.3" r="2.2" fill="#f0627b"/><circle cx="185.3" cy="235" r="2.2" fill="#f0a171"/><circle cx="192" cy="235" r="2.2" fill="#6d9dd2"/><circle cx="235.2" cy="230.8" r="4.4" stroke="#666" stroke-width="1"/><circle cx="230.8" cy="234.7" r="2.5" fill="#fbfbfb" stroke="#666" stroke-width="1"/><rect x="273.7" y="227.4" width="9.8" height="8.8" rx=".8" stroke="#666" stroke-width="1"/><path d="M276.4 230.6V229.8H280.8V230.6M278.6 229.8V234M277.6 234H279.6" stroke="#555" stroke-width=".9"/><circle cx="188.8" cy="274.3" r="1.5" fill="#555"/><circle cx="184.6" cy="279.2" r="1.3" stroke="#666" stroke-width=".8"/><circle cx="188.8" cy="279.2" r="1.3" stroke="#666" stroke-width=".8"/><circle cx="192.9" cy="279.2" r="1.3" stroke="#666" stroke-width=".8"/><path d="M229.6 272.7H238.6Q239.5 272.7 239.5 273.6V278Q239.5 278.9 238.6 278.9H237.2L236.9 281.8L233.6 278.9H229.6Q228.7 278.9 228.7 278V273.6Q228.7 272.7 229.6 272.7Z" stroke="#666" stroke-width="1"/>
<path d="M317.7 76.6V78.4M320.9 76.6V78.4M324.1 76.6V78.4" stroke="#5c5c5c" stroke-width="2.1"/><path d="M317.7 79.8V85.7M320.9 79.8V85.7M324.1 79.8V85.7" stroke="#5c5c5c" stroke-width="2.1"/><path d="M316 105.7H317.8M316 109H317.8M316 112.3H317.8" stroke="#5c5c5c" stroke-width="1.8"/><path d="M319 105.7H325.3M319 109H325.3M319 112.3H325.3" stroke="#5c5c5c" stroke-width="1.8"/><rect x="391.9" y="78.4" width="6.8" height="6.8" stroke="#fff" stroke-width=".9"/><path d="M393.6 81.8H397M395.3 80.1V83.5" stroke="#fff" stroke-width=".9"/>
<rect x="471.3" y="189.2" width="3.1" height="8.6" rx="1.4" fill="#e3e3e3" stroke="#777" stroke-width=".8"/><rect x="476.2" y="184.2" width="3.1" height="13.6" rx="1.4" fill="#e3e3e3" stroke="#777" stroke-width=".8"/><rect x="481.2" y="180.3" width="3.2" height="17.5" rx="1.4" fill="#e3e3e3" stroke="#777" stroke-width=".8"/><rect x="486.1" y="186.7" width="3.1" height="11.1" rx="1.4" fill="#e3e3e3" stroke="#777" stroke-width=".8"/><path d="M471 193.5H489.6" stroke="#666" stroke-width="1"/><rect x="585.6" y="189" width="3.5" height="8.6" rx="1.4" fill="#e3e3e3" stroke="#777" stroke-width=".8"/><rect x="590.4" y="184" width="3.5" height="13.6" rx="1.4" fill="#e3e3e3" stroke="#777" stroke-width=".8"/><rect x="595.2" y="180.2" width="3.6" height="17.4" rx="1.4" fill="#e3e3e3" stroke="#777" stroke-width=".8"/><rect x="600.2" y="186.5" width="3.6" height="11.1" rx="1.4" fill="#e3e3e3" stroke="#777" stroke-width=".8"/><path d="M632.6 157.8L641.4 166.4M641.4 157.8L632.6 166.4" stroke="#666" stroke-width="1.1"/>
<rect x="73.6" y="494.6" width="9.4" height="8" rx=".8" stroke="#888" stroke-width="1"/><path d="M76.6 501V499.4M78.3 501V497.4M80 501V498.6" stroke="#999" stroke-width=".8"/><rect x="80" y="501.6" width="7" height="7.4" fill="#e9e9e9" stroke="none"/><path d="M80 505.4H86.3M83.15 502.2V508.6" stroke="#555" stroke-width="1.5"/><rect x="98.6" y="494.4" width="9.6" height="9" rx=".8" stroke="#888" stroke-width="1"/><path d="M103.4 494.4V503.4M98.6 498.9H108.2" stroke="#888" stroke-width="1"/><rect x="104.8" y="501.6" width="7" height="7.4" fill="#e9e9e9" stroke="none"/><path d="M105 505.4H111.3M108.15 502.2V508.6" stroke="#555" stroke-width="1.5"/>
</svg>

</body></html>
